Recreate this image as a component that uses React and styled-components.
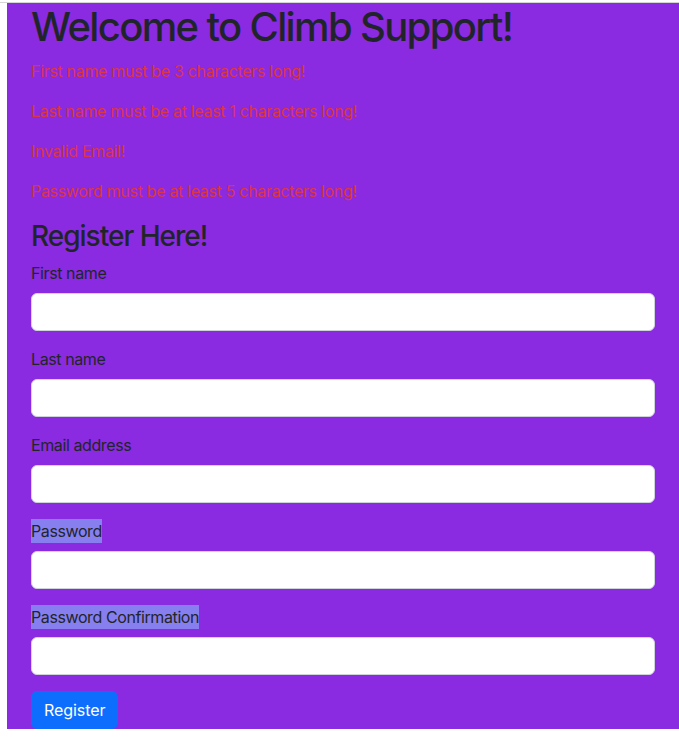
import React from "react";
import styled, { createGlobalStyle } from "styled-components";

const Global = createGlobalStyle`
  html, body { margin: 0; padding: 0; background: #fff; }
  body {
    font-family: Inter, "Noto Sans", "Liberation Sans", sans-serif;
    font-size: 16px;
    line-height: 1.5;
    letter-spacing: -0.32px;
    color: #212529;
    padding-top: 2px;
  }
  * { box-sizing: border-box; }
`;

const Rule = styled.div`
  height: 1px;
  background: #d6d6d6;
`;

const Page = styled.div`
  margin-left: 7px;
  background: #8a2be2;
  padding: 0 24px;
`;

const Title = styled.h1`
  margin: 0 0 8px;
  font-size: 40px;
  font-weight: 500;
  line-height: 1.2;
  letter-spacing: -1.65px;
`;

const Error = styled.p`
  margin: 0 0 16px;
  color: #dc3545;
`;

const Subtitle = styled.h3`
  margin: 0 0 7px;
  padding-top: 1px;
  font-size: 28px;
  font-weight: 500;
  line-height: 1.2;
  letter-spacing: -1px;
`;

const Form = styled.form`
  display: flex;
  flex-direction: column;
  align-items: flex-start;
`;

const Field = styled.div`
  display: flex;
  flex-direction: column;
  align-items: flex-start;
  width: 100%;
  margin-bottom: 16px;
`;

const Label = styled.label`
  margin-bottom: 8px;
  letter-spacing: -0.4px;
  background: ${(p) => (p.$highlight ? "#877ff0" : "transparent")};
`;

const Input = styled.input`
  width: 100%;
  height: 38px;
  padding: 6px 12px;
  font: inherit;
  background: #fff;
  border: 1px solid #ced4da;
  border-radius: 6px;
  outline: none;
`;

const Button = styled.button`
  height: 38px;
  padding: 6px 12px;
  font: inherit;
  letter-spacing: -0.07px;
  color: #fff;
  background: #0d6efd;
  border: 1px solid #0d6efd;
  border-radius: 6px;
`;

const errors = [
  "First name must be 3 characters long!",
  "Last name must be at least 1 characters long!",
  "Invalid Email!",
  "Password must be at least 5 characters long!",
];

const fields = [
  { label: "First name", type: "text" },
  { label: "Last name", type: "text" },
  { label: "Email address", type: "email" },
  { label: "Password", type: "password", hl: true },
  { label: "Password Confirmation", type: "password", hl: true },
];

export default function App() {
  return (
    <>
      <Global />
      <Rule />
      <Page>
        <Title>Welcome to Climb Support!</Title>
        {errors.map((e) => (
          <Error key={e}>{e}</Error>
        ))}
        <Subtitle>Register Here!</Subtitle>
        <Form onSubmit={(e) => e.preventDefault()}>
          {fields.map((f) => (
            <Field key={f.label}>
              <Label $highlight={f.hl}>{f.label}</Label>
              <Input type={f.type} />
            </Field>
          ))}
          <Button type="submit">Register</Button>
        </Form>
      </Page>
    </>
  );
}
